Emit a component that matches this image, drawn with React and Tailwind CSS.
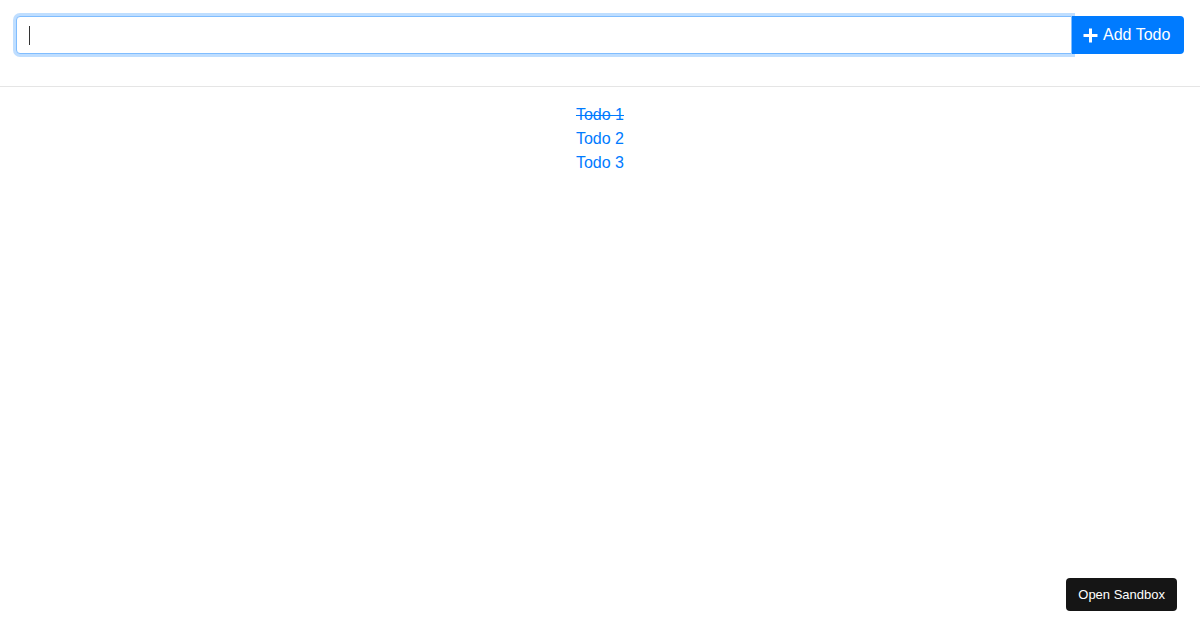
export default function App() {
  return (
    <div className="relative w-[1200px] h-[630px] bg-white overflow-hidden" style={{ fontFamily: '"Liberation Sans", Arial, sans-serif' }}>
      <div className="px-4 pt-4 pb-8">
        <div className="flex h-[38px]">
          <div className="flex-1 flex items-center h-[38px] border border-[#80bdff] rounded-l-[4px] shadow-[0_0_0_3px_rgba(0,123,255,0.25)] bg-white px-3">
            <span className="block w-px h-[19px] bg-[#333]" />
          </div>
          <button className="flex items-center gap-[5px] w-[112px] h-[38px] pl-[11px] bg-[#007bff] text-white text-[16px] rounded-r-[4px]">
            <svg width="15" height="15" viewBox="0 0 15 15">
              <path d="M7.5 0.5v14M0.5 7.5h14" stroke="white" strokeWidth="3" />
            </svg>
            <span>Add Todo</span>
          </button>
        </div>
      </div>
      <div className="h-px bg-[#e5e5e5]" />
      <div className="flex flex-col items-center pt-4 text-[16px] leading-6 text-[#007bff]">
        <span className="line-through">Todo 1</span>
        <span>Todo 2</span>
        <span>Todo 3</span>
      </div>
      <div className="absolute right-[23px] bottom-[19px] h-[33px] px-3 flex items-center rounded-[4px] bg-[#151515] text-white text-[13px]">
        Open Sandbox
      </div>
    </div>
  );
}
